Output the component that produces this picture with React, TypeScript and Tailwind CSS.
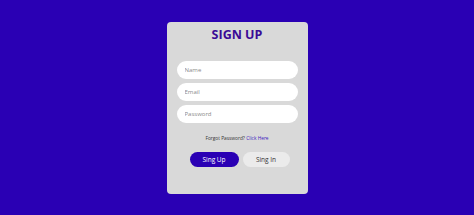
export default function App() {
  return (
    <div className="w-[474px] h-[215px] bg-[#2a00b4] flex justify-center pt-[22px] font-['Open_Sans',sans-serif]">
      <div className="w-[141px] h-[172px] bg-[#d9d9d9] rounded-[4px] px-[10px] flex flex-col items-center">
        <h1 className="mt-[4px] text-[12.5px] leading-[18px] font-bold text-[#3b0a96]">SIGN UP</h1>
        <div className="mt-[17px] w-full flex flex-col gap-[4px]">
          <input
            placeholder="Name"
            className="w-full h-[18px] rounded-full bg-white px-[8px] text-[6px] text-gray-700 placeholder:text-[#8a8a8a] outline-none"
          />
          <input
            placeholder="Email"
            className="w-full h-[18px] rounded-full bg-white px-[8px] text-[6px] text-gray-700 placeholder:text-[#8a8a8a] outline-none"
          />
          <input
            placeholder="Password"
            className="w-full h-[18px] rounded-full bg-white px-[8px] text-[6px] text-gray-700 placeholder:text-[#8a8a8a] outline-none"
          />
        </div>
        <p className="mt-[11px] text-[4.8px] leading-[8px] text-[#333]">
          Forgot Password? <a className="text-[#3b1ac0]">Click Here</a>
        </p>
        <div className="mt-[10px] ml-[5px] flex gap-[4px]">
          <button className="w-[49px] h-[15px] rounded-full bg-[#2a00b4] text-white text-[6.5px]">Sing Up</button>
          <button className="w-[47px] h-[15px] rounded-full bg-[#ebebeb] text-[#333] text-[6.5px]">Sing In</button>
        </div>
      </div>
    </div>
  );
}
